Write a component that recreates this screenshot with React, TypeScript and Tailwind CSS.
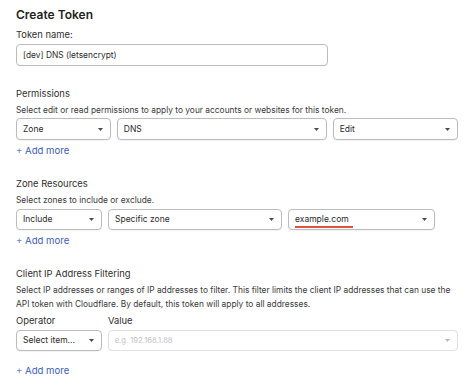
type SelectProps = {
  value: string;
  className: string;
};

function Caret({ light }: { light?: boolean }) {
  return (
    <svg width="5" height="3" viewBox="0 0 5 3" className="shrink-0">
      <path d="M0 0h5L2.5 3z" fill={light ? "#b8b8b8" : "#4a4a4a"} />
    </svg>
  );
}

function Select({ value, className }: SelectProps) {
  return (
    <div
      className={`flex h-full items-center justify-between rounded-[4px] border border-[#bcbcbc] bg-white pl-[6px] pr-[7px] shadow-[0_1px_1px_rgba(0,0,0,0.05)] ${className}`}
    >
      <span className="text-[8.5px] text-[#2b2b2b]">{value}</span>
      <Caret />
    </div>
  );
}

function AddMore({ className }: { className: string }) {
  return (
    <div className={`h-4 text-[9.6px] leading-4 text-[#3b5cc0] ${className}`}>
      <span className="text-[#6d86cf]">+</span> Add more
    </div>
  );
}

function Label({ children, className }: { children: string; className: string }) {
  return (
    <div className={`h-[14px] text-[9.4px] leading-[14px] text-[#2e2e2e] ${className}`}>
      {children}
    </div>
  );
}

function Desc({ children, className }: { children: string; className: string }) {
  return (
    <p className={`w-[446px] text-[8.4px] leading-[14px] text-[#3a3a3a] ${className}`}>
      {children}
    </p>
  );
}

export default function App() {
  return (
    <div
      className="h-[389px] w-[474px] overflow-hidden bg-white px-4 pt-[5px]"
      style={{ fontFamily: "Inter, 'Noto Sans', sans-serif" }}
    >
      <h1 className="h-5 text-[12px] font-semibold leading-5 text-[#1f1f1f]">
        Create Token
      </h1>

      <Label className="mt-[3px]">Token name:</Label>
      <div className="mt-[2px] flex h-[22px] w-[312px] items-center rounded-[4px] border border-[#bcbcbc] bg-white px-[6px] text-[8.4px] text-[#2b2b2b]">
        [dev] DNS (letsencrypt)
      </div>

      <Label className="mt-[21px]">Permissions</Label>
      <Desc className="mt-[2px] h-[13px] leading-[13px]">
        Select edit or read permissions to apply to your accounts or websites for this token.
      </Desc>
      <div className="mt-[2px] flex h-[22px] gap-[6px]">
        <Select value="Zone" className="w-[96px]" />
        <Select value="DNS" className="w-[213px]" />
        <Select value="Edit" className="w-[127px]" />
      </div>
      <AddMore className="mt-[3px]" />

      <Label className="mt-[18px]">Zone Resources</Label>
      <Desc className="mt-[2px] h-[13px] leading-[13px]">
        Select zones to include or exclude.
      </Desc>
      <div className="mt-[3px] flex h-[21px] gap-[6px]">
        <Select value="Include" className="w-[86px]" />
        <Select value="Specific zone" className="w-[174px]" />
        <div className="flex h-full w-[147px] items-center justify-between rounded-[4px] border border-[#bcbcbc] bg-white pl-[6px] pr-[7px] shadow-[0_1px_1px_rgba(0,0,0,0.05)]">
          <span className="relative text-[8.5px] text-[#2b2b2b]">
            example.com
            <span className="absolute -bottom-[2px] -right-[4px] left-0 h-[1.5px] bg-[#e0533f]" />
          </span>
          <Caret />
        </div>
      </div>
      <AddMore className="mt-[3px]" />

      <Label className="mt-[18px]">Client IP Address Filtering</Label>
      <Desc className="mt-[2px]">
        Select IP addresses or ranges of IP addresses to filter. This filter limits the client IP addresses that can use the API token with Cloudflare. By default, this token will apply to all addresses.
      </Desc>
      <div className="mt-[3px] flex h-[14px] gap-[6px] text-[9.4px] leading-[14px] text-[#2e2e2e]">
        <span className="w-[86px]">Operator</span>
        <span>Value</span>
      </div>
      <div className="mt-[2px] flex h-[21px] gap-[6px]">
        <Select value="Select item..." className="w-[86px]" />
        <div className="flex h-full w-[352px] items-center justify-between rounded-[4px] border border-[#e0e0e0] bg-white pl-[6px] pr-[7px]">
          <span className="text-[7.6px] text-[#c2c2c2]">e.g. 192.168.1.88</span>
          <Caret light />
        </div>
      </div>
      <AddMore className="mt-[12px]" />
    </div>
  );
}
